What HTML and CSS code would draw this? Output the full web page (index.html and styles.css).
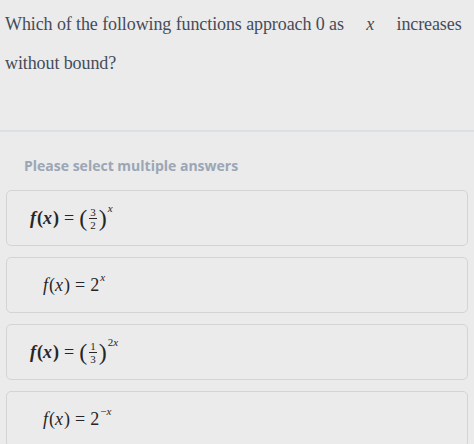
FILE: index.html
```html
<!DOCTYPE html>
<html>
<head>
<meta charset="utf-8">
<link rel="stylesheet" href="styles.css">
</head>
<body>
<div class="question">
  <p class="qtext">Which of the following functions approach 0 as <span class="mvar">x</span> increases without bound?</p>
</div>
<div class="divider"></div>
<div class="answers">
  <div class="hint">Please select multiple answers</div>
  <div class="card">
    <span class="math bold"><i>f</i>(<i>x</i>)<span class="eq">=</span><span class="paren">(</span><span class="frac"><span class="num">3</span><span class="den">2</span></span><span class="paren">)</span><sup><i>x</i></sup></span>
  </div>
  <div class="card">
    <span class="math indent"><i>f</i>(<i>x</i>)<span class="eq">=</span>2<sup><i>x</i></sup></span>
  </div>
  <div class="card">
    <span class="math bold"><i>f</i>(<i>x</i>)<span class="eq">=</span><span class="paren">(</span><span class="frac"><span class="num">1</span><span class="den">3</span></span><span class="paren">)</span><sup>2<i>x</i></sup></span>
  </div>
  <div class="card">
    <span class="math indent"><i>f</i>(<i>x</i>)<span class="eq">=</span>2<sup>−<i>x</i></sup></span>
  </div>
</div>
</body>
</html>
```
FILE: styles.css
```css
html, body {
  margin: 0;
  padding: 0;
  background: #ebebeb;
}
body {
  width: 474px;
  height: 444px;
  overflow: hidden;
}
.question {
  height: 130px;
  padding: 5px 8px 0 5px;
  box-sizing: border-box;
}
.qtext {
  margin: 0;
  font-family: "Liberation Serif", serif;
  font-size: 18px;
  line-height: 39px;
  color: #454c59;
  letter-spacing: -0.1px;
}
.mvar {
  font-family: "Liberation Serif", serif;
  font-style: italic;
  font-size: 18px;
  padding: 0 18px 0 18px;
}
.divider {
  height: 2px;
  background: #dcdfe3;
}
.answers {
  padding: 24px 6px 0 6px;
}
.hint {
  font-family: "Open Sans", sans-serif;
  font-weight: 700;
  font-size: 14px;
  color: #9ba6b5;
  padding-left: 18px;
  height: 34px;
  line-height: 20px;
}
.card {
  height: 56px;
  box-sizing: border-box;
  border: 1.5px solid #d4d4d4;
  border-radius: 5px;
  margin-bottom: 11px;
  display: flex;
  align-items: center;
  padding-left: 23px;
  background: #ebebeb;
}
.math {
  font-family: "Liberation Serif", serif;
  font-size: 18px;
  color: #262626;
  white-space: nowrap;
  display: inline-flex;
  align-items: center;
}
.math i {
  padding-right: 1px;
}
.math.bold {
  font-weight: 700;
}
.math.bold .frac, .math.bold sup, .math.bold .eq {
  font-weight: 400;
}
.eq {
  margin: 0 5px;
}
.math.indent {
  padding-left: 13px;
}
.math sup {
  font-size: 11px;
  line-height: 1;
  margin-left: 1px;
  align-self: flex-start;
  position: relative;
  top: -3px;
}
.paren {
  font-size: 24px;
  font-weight: 400;
  line-height: 1;
}
.frac {
  display: inline-flex;
  flex-direction: column;
  align-items: center;
  font-size: 11px;
  line-height: 10px;
  margin: 0 2px;
}
.frac .num {
  border-bottom: 1px solid #262626;
  padding: 0 1px 1px;
}
.frac .den {
  padding-top: 1px;
}
```
